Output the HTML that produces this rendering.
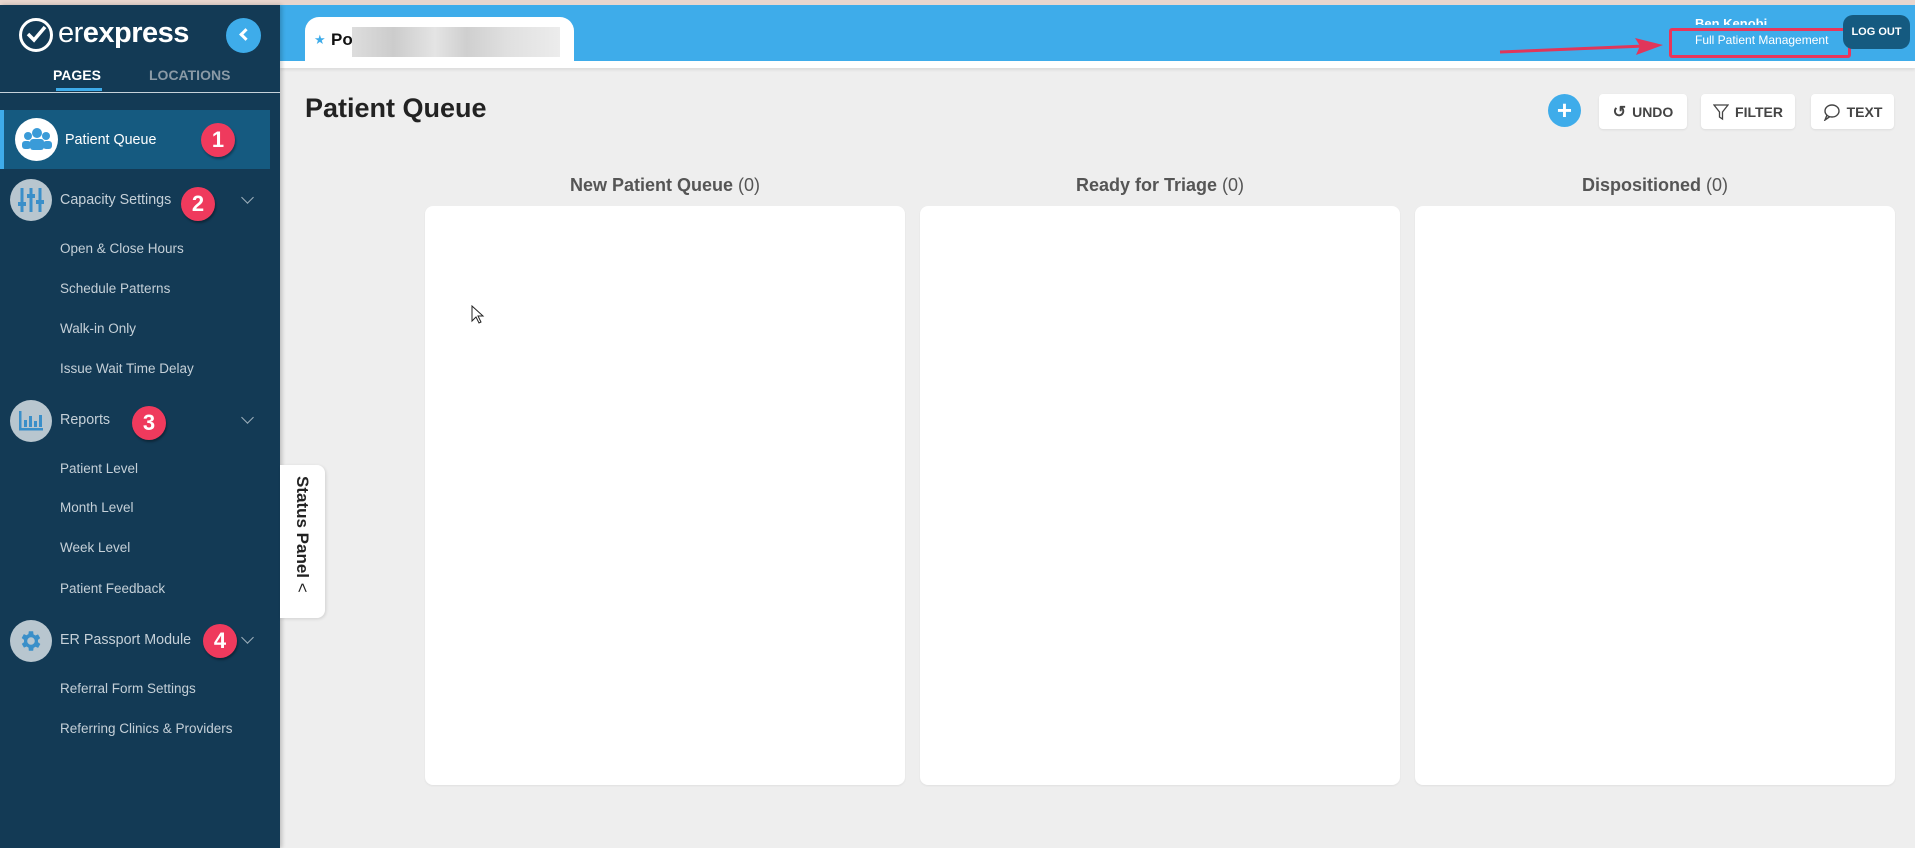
<!DOCTYPE html>
<html><head><meta charset="utf-8"><style>
*{margin:0;padding:0;box-sizing:border-box}
body{width:1915px;height:848px;overflow:hidden;background:#eeeeee;font-family:"Liberation Sans",Arial,sans-serif;position:relative}
.abs{position:absolute}
#top{left:0;top:0;width:1915px;height:5px;background:#e8d6ce}
#hdr{left:280px;top:5px;width:1635px;height:56px;background:#3eacea}
#strip{left:280px;top:61px;width:1635px;height:7px;background:#fff;box-shadow:0 2px 3px rgba(0,0,0,.08)}
#side{left:0;top:5px;width:280px;height:843px;background:#133a55;box-shadow:2px 0 4px rgba(0,0,0,.2)}
.sub{position:absolute;left:60px;color:#c5d0d8;font-size:13.5px}
.item{position:absolute;left:60px;color:#c5d0d8;font-size:14.3px}
.ic{position:absolute;width:42px;height:42px;border-radius:50%;background:#b8c6cf}
.badge{position:absolute;width:34px;height:34px;border-radius:50%;background:#ef3a5d;color:#fff;font-weight:bold;font-size:22px;text-align:center;line-height:34px;box-shadow:1px 2px 2px rgba(0,0,0,.35)}
.chev{position:absolute;left:243px;width:9px;height:9px;border-right:1.5px solid #9fb0bd;border-bottom:1.5px solid #9fb0bd;transform:rotate(45deg)}
.col{position:absolute;top:206px;height:579px;width:480px;background:#fff;border-radius:8px;box-shadow:0 1px 2px rgba(0,0,0,.06)}
.ct{position:absolute;top:175px;width:480px;text-align:center;font-size:18px;font-weight:bold;color:#555}
.ct span{font-weight:normal}
.btn{position:absolute;top:94px;height:35px;background:#fff;border-radius:4px;font-weight:bold;font-size:14px;color:#444;display:flex;align-items:center;justify-content:center;gap:6px;box-shadow:0 1px 2px rgba(0,0,0,.08)}
</style></head><body>
<div class="abs" id="top"></div>
<div class="abs" id="hdr"></div>
<div class="abs" id="strip"></div>

<!-- tab -->
<div class="abs" style="left:305px;top:17px;width:269px;height:44px;background:#fff;border-radius:14px 14px 0 0"></div>
<div class="abs" style="left:314px;top:32px;color:#3eacea;font-size:13px">★</div>
<div class="abs" style="left:331px;top:30px;font-weight:bold;font-size:17px;color:#111">Po</div>
<div class="abs" style="left:352px;top:27px;width:208px;height:30px;background:linear-gradient(90deg,#ddd,#ccc 20%,#e4e4e4 40%,#cfcfcf 55%,#e0e0e0 75%,#ececec)"></div>

<!-- user -->
<div class="abs" style="left:1695px;top:14px;color:#fff;font-weight:bold;font-size:13px;height:11px;overflow:hidden;line-height:20px">Ben Kenobi</div>
<div class="abs" style="left:1695px;top:33px;color:#fff;font-size:12px">Full Patient Management</div>
<div class="abs" style="left:1669px;top:28px;width:182px;height:30px;border:3px solid #e8365b;border-radius:3px"></div>
<div class="abs" style="left:1843px;top:15px;width:67px;height:34px;background:#155a80;border-radius:10px;color:#fff;font-weight:bold;font-size:11px;text-align:center;line-height:34px">LOG OUT</div>
<svg class="abs" style="left:1495px;top:35px" width="175" height="25"><line x1="5" y1="17" x2="150" y2="11" stroke="#e0365a" stroke-width="3"/><polygon points="168,10 140,3 145,11 141,20" fill="#e0365a"/></svg>

<!-- sidebar -->
<div class="abs" id="side"></div>
<svg class="abs" style="left:18px;top:17px" width="36" height="36"><circle cx="18" cy="18" r="15.5" fill="none" stroke="#fff" stroke-width="3"/><path d="M10 17 L16 23 L27 10" fill="none" stroke="#fff" stroke-width="3.5"/></svg>
<div class="abs" style="left:58px;top:17px;color:#fff;font-size:29px;letter-spacing:-0.5px"><span style="font-weight:normal">er</span><b>express</b></div>
<div class="abs" style="left:226px;top:18px;width:35px;height:35px;border-radius:50%;background:#3eacea"></div>
<div class="abs" style="left:241px;top:30px;width:9px;height:9px;border-left:3px solid #fff;border-bottom:3px solid #fff;transform:rotate(45deg)"></div>
<div class="abs" style="left:53px;top:67px;color:#fff;font-weight:bold;font-size:14px">PAGES</div>
<div class="abs" style="left:149px;top:67px;color:#8a9aa6;font-weight:bold;font-size:14px">LOCATIONS</div>
<div class="abs" style="left:56px;top:88px;width:46px;height:3px;background:#3eacea"></div>
<div class="abs" style="left:0;top:92px;width:280px;height:1px;background:#c6d2da"></div>

<div class="abs" style="left:0;top:110px;width:270px;height:59px;background:#155a80;border-left:4px solid #3eacea"></div>
<div class="abs" style="left:15px;top:118px;width:43px;height:43px;border-radius:50%;background:#fff"></div>
<svg class="abs" style="left:21px;top:126px" width="32" height="26"><circle cx="16" cy="7" r="5" fill="#3a9bd8"/><circle cx="7" cy="10" r="4" fill="#3a9bd8"/><circle cx="25" cy="10" r="4" fill="#3a9bd8"/><rect x="9" y="13" width="14" height="11" rx="3" fill="#3a9bd8"/><rect x="1" y="15" width="9" height="8" rx="3" fill="#3a9bd8"/><rect x="22" y="15" width="9" height="8" rx="3" fill="#3a9bd8"/></svg>
<div class="item" style="left:65px;top:132px;color:#fff">Patient Queue</div>
<div class="badge" style="left:201px;top:123px">1</div>

<div class="ic" style="left:10px;top:179px"></div>
<svg class="abs" style="left:16px;top:186px" width="30" height="28"><g stroke="#3a8fc9" stroke-width="3"><line x1="6" y1="2" x2="6" y2="26"/><line x1="15" y1="2" x2="15" y2="26"/><line x1="24" y1="2" x2="24" y2="26"/></g><g fill="#3a8fc9"><rect x="2" y="16" width="8" height="4"/><rect x="11" y="8" width="8" height="4"/><rect x="20" y="14" width="8" height="4"/></g></svg>
<div class="item" style="top:192px">Capacity Settings</div>
<div class="badge" style="left:181px;top:187px">2</div>
<div class="chev" style="top:193px"></div>
<div class="sub" style="top:241px">Open &amp; Close Hours</div>
<div class="sub" style="top:281px">Schedule Patterns</div>
<div class="sub" style="top:321px">Walk-in Only</div>
<div class="sub" style="top:361px">Issue Wait Time Delay</div>

<div class="ic" style="left:10px;top:400px"></div>
<svg class="abs" style="left:17px;top:408px" width="28" height="26"><g fill="#3a8fc9"><rect x="2" y="3" width="2.5" height="19"/><rect x="2" y="20" width="24" height="2.5"/><rect x="7" y="12" width="3" height="7"/><rect x="12" y="8" width="3" height="11"/><rect x="17" y="13" width="3" height="6"/><rect x="22" y="7" width="3" height="12"/></g></svg>
<div class="item" style="top:412px">Reports</div>
<div class="badge" style="left:132px;top:406px">3</div>
<div class="chev" style="top:413px"></div>
<div class="sub" style="top:461px">Patient Level</div>
<div class="sub" style="top:500px">Month Level</div>
<div class="sub" style="top:540px">Week Level</div>
<div class="sub" style="top:581px">Patient Feedback</div>

<div class="ic" style="left:10px;top:620px"></div>
<svg class="abs" style="left:18px;top:628px" width="26" height="26" viewBox="0 0 24 24"><path fill="#3a8fc9" d="M19.4 13a7.5 7.5 0 0 0 0-2l2.1-1.6-2-3.5-2.5 1a7 7 0 0 0-1.7-1L15 3h-4l-.4 2.7a7 7 0 0 0-1.7 1l-2.5-1-2 3.5L6.6 11a7.5 7.5 0 0 0 0 2l-2.1 1.6 2 3.5 2.5-1a7 7 0 0 0 1.7 1L11 21h4l.4-2.7a7 7 0 0 0 1.7-1l2.5 1 2-3.5zM13 15.5a3.5 3.5 0 1 1 0-7 3.5 3.5 0 0 1 0 7z" transform="translate(-1 0)"/></svg>
<div class="item" style="top:632px">ER Passport Module</div>
<div class="badge" style="left:203px;top:624px">4</div>
<div class="chev" style="top:633px"></div>
<div class="sub" style="top:681px">Referral Form Settings</div>
<div class="sub" style="top:721px">Referring Clinics &amp; Providers</div>

<!-- status panel -->
<div class="abs" style="left:280px;top:465px;width:45px;height:153px;background:#fff;border-radius:0 8px 8px 0;box-shadow:1px 1px 3px rgba(0,0,0,.12)"></div>
<div class="abs" style="left:290px;top:476px;width:24px;height:140px;writing-mode:vertical-rl;font-weight:bold;font-size:17px;color:#222;white-space:nowrap;line-height:24px">Status Panel <span style="font-weight:normal">&lt;</span></div>

<!-- main -->
<div class="abs" style="left:305px;top:93px;font-size:27px;font-weight:bold;color:#222">Patient Queue</div>
<div class="abs" style="left:1548px;top:94px;width:33px;height:33px;border-radius:50%;background:#3eacea;color:#fff;font-weight:bold;font-size:26px;text-align:center;line-height:33px">+</div>
<div class="btn" style="left:1599px;width:88px"><span style="font-size:16px">↺</span>UNDO</div>
<div class="btn" style="left:1701px;width:94px"><svg width="16" height="18"><path d="M1 2h14l-5.5 7v7l-3-2V9z" fill="none" stroke="#444" stroke-width="1.3"/></svg>FILTER</div>
<div class="btn" style="left:1811px;width:83px"><svg width="18" height="18"><ellipse cx="9" cy="8" rx="7" ry="6" fill="none" stroke="#444" stroke-width="1.4"/><path d="M4 12 L2 17 L7 13.5" fill="none" stroke="#444" stroke-width="1.4"/></svg>TEXT</div>

<div class="ct" style="left:425px">New Patient Queue <span>(0)</span></div>
<div class="ct" style="left:920px">Ready for Triage <span>(0)</span></div>
<div class="ct" style="left:1415px">Dispositioned <span>(0)</span></div>
<div class="col" style="left:425px"></div>
<div class="col" style="left:920px"></div>
<div class="col" style="left:1415px"></div>
<svg class="abs" style="left:471px;top:305px" width="14" height="20"><path d="M1 1v15l4-4 3 6 2-1-3-6h5z" fill="#fff" stroke="#222" stroke-width="1"/></svg>
</body></html>
